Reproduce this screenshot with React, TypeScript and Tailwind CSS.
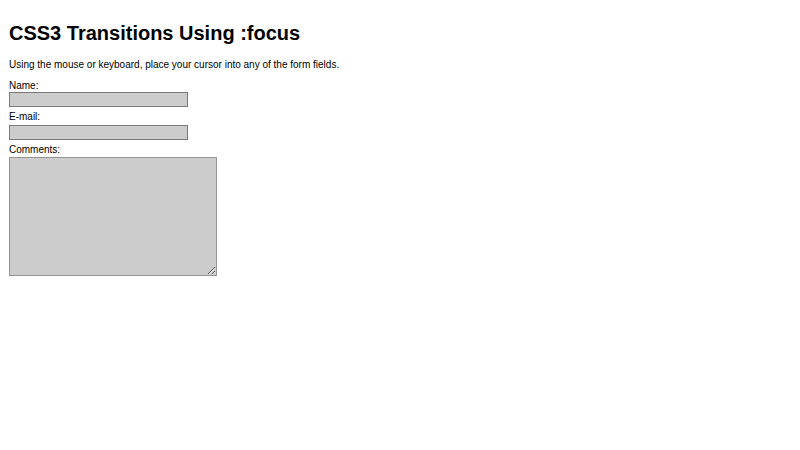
import React from 'react';

const fieldClass = 'block border border-[#7a7a7a] bg-[#cccccc] p-0 text-[10px] outline-none';

export default function App() {
  return (
    <div className="min-h-[450px] w-[800px] bg-white px-[9px] pt-[22px] font-['Liberation_Sans',Arial,sans-serif] text-black">
      <h1 className="text-[20px] font-bold leading-[23px]">CSS3 Transitions Using :focus</h1>
      <p className="mt-[14px] text-[10px] leading-[12px]">
        Using the mouse or keyboard, place your cursor into any of the form fields.
      </p>
      <form className="text-[10px] leading-[12px]">
        <label htmlFor="name" className="mt-[9px] block">Name:</label>
        <input id="name" type="text" className={`${fieldClass} h-[15px] w-[179px]`} />
        <label htmlFor="email" className="mt-[4px] block">E-mail:</label>
        <input id="email" type="text" className={`${fieldClass} mt-[2px] h-[15px] w-[179px]`} />
        <label htmlFor="comments" className="mt-[4px] block">Comments:</label>
        <textarea
          id="comments"
          className={`${fieldClass} mt-[1px] h-[119px] w-[208px] border-[#949494]`}
        />
      </form>
    </div>
  );
}
